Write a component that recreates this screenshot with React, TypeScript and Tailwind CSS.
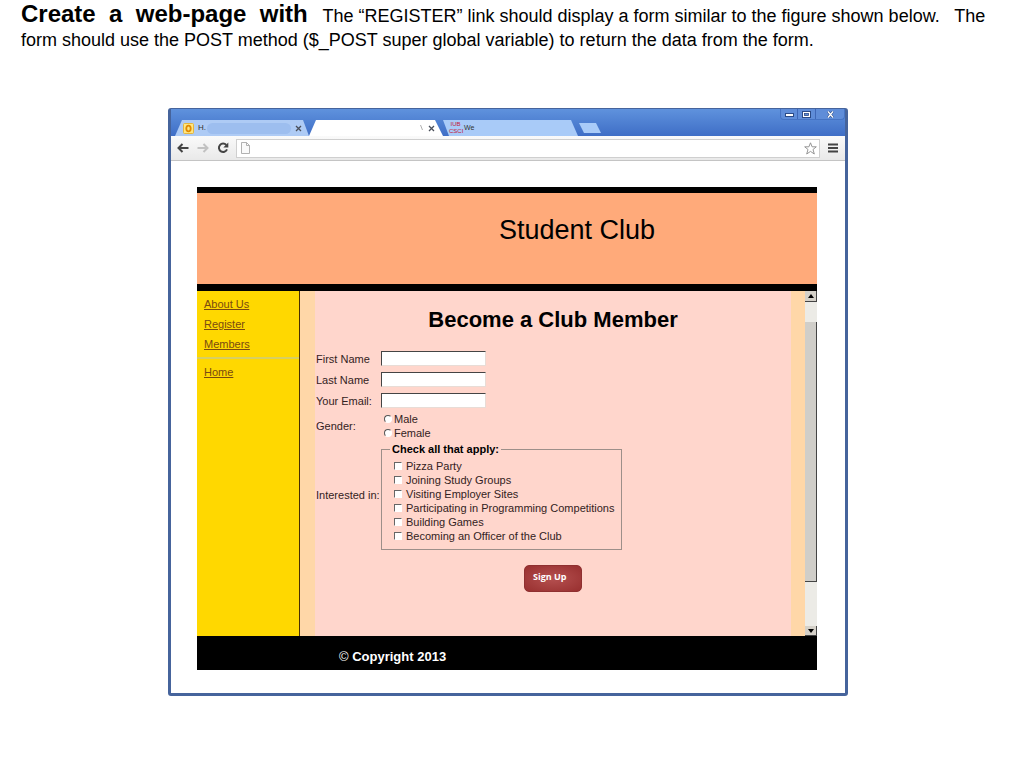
import React from 'react';

const links = ['About Us', 'Register', 'Members'];

const textFields = [
  { id: 'firstName', label: 'First Name', type: 'text' },
  { id: 'lastName', label: 'Last Name', type: 'text' },
  { id: 'email', label: 'Your Email:', type: 'email' },
];

const interests = [
  'Pizza Party',
  'Joining Study Groups',
  'Visiting Employer Sites',
  'Participating in Programming Competitions',
  'Building Games',
  'Becoming an Officer of the Club',
];

function TabStrip() {
  return (
    <div className="flex h-[27px] items-end bg-linear-to-b from-[#5f92dd] to-[#3f6ec6] pl-1">
      <button className="flex h-4 w-[134px] items-center bg-[#aecbf5] pl-2 text-[8px] text-[#333] [clip-path:polygon(7px_0,128px_0,100%_100%,0_100%)]">
        <svg className="size-[11px]" viewBox="0 0 11 11">
          <rect x="0.5" y="0.5" width="10" height="10" rx="1" fill="#ffe680" stroke="#e5b53c" />
          <ellipse cx="5.5" cy="5.5" rx="2.2" ry="2.9" fill="none" stroke="#e08a00" strokeWidth="1.8" />
        </svg>
        <span className="ml-1">H.</span>
        <span className="ml-px h-[11px] w-[84px] rounded-md bg-[#9dbeef]" />
        <CloseIcon />
      </button>
      <button aria-label="Current tab" className="flex h-4 w-[134px] items-center bg-white pl-[111px] text-[#333] [clip-path:polygon(7px_0,126px_0,100%_100%,0_100%)]">
        <svg className="h-2 w-1" viewBox="0 0 4 8">
          <path d="M0.5 1l2 5" stroke="#999" strokeWidth="0.8" />
        </svg>
        <CloseIcon />
      </button>
      <button className="flex h-4 w-[135px] items-center bg-[#a9cbf8] pl-[6px] text-[7px] text-[#333] [clip-path:polygon(0_0,128px_0,100%_100%,6px_100%)]">
        <span className="w-[13px] text-[6px] leading-[7px] text-[#c0203a]">
          IUB
          <br />
          CSCI
        </span>
        <span className="ml-[2px]">We</span>
      </button>
      <button aria-label="New tab" className="mb-[3px] ml-px h-[10px] w-[22px] bg-[#a9cbf8] [clip-path:polygon(0_0,17px_0,100%_100%,5px_100%)]" />
    </div>
  );
}

function CloseIcon() {
  return (
    <svg className="ml-1 size-[7px]" viewBox="0 0 7 7">
      <path d="M1 1l5 5M6 1L1 6" stroke="#4a4f5a" strokeWidth="1.3" />
    </svg>
  );
}

function WindowButtons() {
  return (
    <div className="absolute top-0 right-0 flex h-[11px] divide-x divide-[#3f68b8] rounded-b border border-t-0 border-[#4674c4] bg-[#5f8dd9]">
      <button aria-label="Minimize" className="flex w-[17px] items-center justify-center">
        <svg className="h-[6px] w-[9px]" viewBox="0 0 9 6">
          <rect x="0.5" y="2.5" width="8" height="3" fill="#fff" stroke="#2b4a86" />
        </svg>
      </button>
      <button aria-label="Maximize" className="flex w-[18px] items-center justify-center">
        <svg className="h-[7px] w-[9px]" viewBox="0 0 9 7">
          <rect x="0.5" y="0.5" width="8" height="6" fill="#fff" stroke="#2b4a86" />
          <rect x="2.5" y="2.5" width="4" height="2" fill="#5f8dd9" stroke="#2b4a86" strokeWidth="0.8" />
        </svg>
      </button>
      <button aria-label="Close" className="flex w-[28px] items-center justify-center">
        <svg className="size-[7px]" viewBox="0 0 7 7">
          <path d="M1 0.5l5 6M6 0.5L1 6.5" stroke="#2b4a86" strokeWidth="2.4" />
          <path d="M1 0.5l5 6M6 0.5L1 6.5" stroke="#fff" strokeWidth="1.3" />
        </svg>
      </button>
    </div>
  );
}

function Toolbar() {
  return (
    <div className="flex h-[25px] items-center border-b border-[#c4c4c4] bg-linear-to-b from-[#fafafa] to-[#e9e9e9] pr-[7px] pl-[6px]">
      <button aria-label="Back">
        <svg className="h-[10px] w-3" viewBox="0 0 12 10">
          <path d="M11.5 5H2M5.5 1L1.5 5l4 4" fill="none" stroke="#444" strokeWidth="2" />
        </svg>
      </button>
      <button aria-label="Forward" className="ml-2">
        <svg className="h-[10px] w-3" viewBox="0 0 12 10">
          <path d="M0.5 5H10M6.5 1l4 4-4 4" fill="none" stroke="#c2c2c2" strokeWidth="2" />
        </svg>
      </button>
      <button aria-label="Reload" className="ml-2">
        <svg className="size-3" viewBox="0 0 12 12">
          <path d="M9.3 3A4.2 4.2 0 1 0 10 7.4" fill="none" stroke="#444" strokeWidth="2" />
          <path d="M11.3 0.5v5h-5z" fill="#444" />
        </svg>
      </button>
      <div className="ml-[7px] flex h-[19px] flex-1 items-center border border-[#cfcfcf] bg-white pr-[2px] pl-1">
        <svg className="h-3 w-[9px]" viewBox="0 0 9 12">
          <path d="M0.5 0.5h5l3 3v8h-8zM5.5 0.5v3h3" fill="#fafafa" stroke="#a8a8a8" strokeWidth="0.9" />
        </svg>
        <input aria-label="Address" className="h-4 min-w-0 flex-1 outline-none" />
        <svg className="size-[13px]" viewBox="0 0 13 13">
          <path d="M6.500 0.800l1.600 4h4.200L9 7.500l1.300 4.500-3.800-2.600L2.700 12 4 7.500 0.700 4.800h4.200z" fill="#fff" stroke="#8a8a8a" strokeWidth="0.9" />
        </svg>
      </div>
      <button aria-label="Menu" className="ml-2">
        <svg className="h-[10px] w-[10px]" viewBox="0 0 10 10">
          <path d="M0 1.500h10M0 5h10M0 8.500h10" stroke="#444" strokeWidth="2" />
        </svg>
      </button>
    </div>
  );
}

function Scrollbar() {
  return (
    <div className="flex w-3 flex-col bg-[#ecebe6]">
      <button aria-label="Scroll up" className="flex h-[11px] items-center justify-center border-r border-b border-[#444] bg-[#d4d0c8]">
        <svg className="h-1 w-[6px]" viewBox="0 0 6 4">
          <path d="M3 0l3 4H0z" fill="#000" />
        </svg>
      </button>
      <div className="h-5" />
      <div className="flex-1 border-r border-b border-[#444] bg-[#d0cec9]" />
      <div className="h-11" />
      <button aria-label="Scroll down" className="flex h-[10px] items-center justify-center border-r border-b border-[#444] bg-[#d4d0c8]">
        <svg className="h-1 w-[6px]" viewBox="0 0 6 4">
          <path d="M0 0h6L3 4z" fill="#000" />
        </svg>
      </button>
    </div>
  );
}

function RegisterForm() {
  return (
    <form method="post" onSubmit={(e) => e.preventDefault()} className="flex-1 bg-[#ffd6cc] pt-[17px] pb-11 text-[11px] leading-[14px] text-[#332222]">
      <h2 className="text-center text-[22px] leading-6 font-bold text-black">Become a Club Member</h2>

      <div className="mt-[19px] grid grid-cols-[65px_1fr] items-center gap-y-[6px] pl-px">
        {textFields.map((f) => (
          <React.Fragment key={f.id}>
            <label htmlFor={f.id}>{f.label}</label>
            <input id={f.id} name={f.id} type={f.type} className="h-[15px] w-[105px] border border-t-[#444] border-r-[#e8dcd6] border-b-[#e8dcd6] border-l-[#444] bg-white px-1 outline-none" />
          </React.Fragment>
        ))}
      </div>

      <div className="mt-1 grid grid-cols-[65px_1fr] items-center pl-px">
        <span id="gender">Gender:</span>
        <div role="radiogroup" aria-labelledby="gender" className="pl-[3px]">
          {['Male', 'Female'].map((g) => (
            <label key={g} className="flex items-center gap-[2px]">
              <input type="radio" name="gender" value={g} className="size-2 appearance-none rounded-full border border-t-[#555] border-r-white border-b-white border-l-[#555] bg-white checked:bg-black" />
              {g}
            </label>
          ))}
        </div>

        <span>Interested in:</span>
        <fieldset className="mt-[2px] justify-self-start border border-[#9d8f89] pr-[7px] pb-[6px] pl-3">
          <legend className="-ml-1 px-[2px] font-bold text-black">Check all that apply:</legend>
          <div className="pt-[3px]">
            {interests.map((item) => (
              <label key={item} className="flex items-center gap-1">
                <input type="checkbox" name="interests" value={item} className="size-2 appearance-none border border-t-[#666] border-r-white border-b-white border-l-[#666] bg-white checked:bg-black" />
                {item}
              </label>
            ))}
          </div>
        </fieldset>
      </div>

      <div className="mt-[15px] flex justify-center">
        <button type="submit" className="h-[27px] w-[58px] rounded-[5px] border border-[#8f3030] bg-radial from-[#b55050] to-[#982f2f] pb-1 pl-2 text-left font-['Open_Sans',sans-serif] text-[9px] font-bold text-white">
          Sign Up
        </button>
      </div>
    </form>
  );
}

export default function App() {
  return (
    <div className="bg-white font-['Liberation_Sans',sans-serif] text-black">
      <p className="h-[108px] px-[21px] pt-[2px] text-[18px] leading-6">
        <strong className="text-2xl leading-6">Create&nbsp; a&nbsp; web-page&nbsp; with</strong>
        &nbsp;&nbsp; The “REGISTER” link should display a form similar to the figure shown below.&nbsp;&nbsp; The form should use the POST method ($_POST super global variable) to return the data from the form.
      </p>

      <div className="relative mr-44 ml-42 rounded-[3px] border-x-[3px] border-t border-b-[3px] border-[#46649c] bg-white">
        <TabStrip />
        <WindowButtons />
        <Toolbar />

        <div className="mt-[26px] mr-7 mb-[23px] ml-[26px]">
          <header className="border-t-[6px] border-b-[7px] border-black bg-[#ffaa7a] pt-[22px] pb-[38px] pl-35 text-center text-[27px] leading-[31px]">
            <h1>Student Club</h1>
          </header>

          <div className="flex">
            <nav className="w-[103px] border-r border-[#4a3000] bg-[#ffd800] pt-[3px] text-[11px] leading-5 text-[#7a4a10]">
              {links.map((l) => (
                <a key={l} href="#" className="block pl-[7px] underline">{l}</a>
              ))}
              <hr className="mt-[3px] mb-[3px] border-t-2 border-[#d8cf60]" />
              <a href="#" className="block pl-[7px] underline">Home</a>
            </nav>
            <main className="flex flex-1 bg-[#ffd7a8] pl-[15px]">
              <RegisterForm />
              <div className="w-[14px]" />
              <Scrollbar />
            </main>
          </div>

          <footer className="bg-black pt-3 pb-1 pl-[142px] text-[13px] leading-[18px] text-white">
            © <b>Copyright 2013</b>
          </footer>
        </div>
      </div>
    </div>
  );
}
